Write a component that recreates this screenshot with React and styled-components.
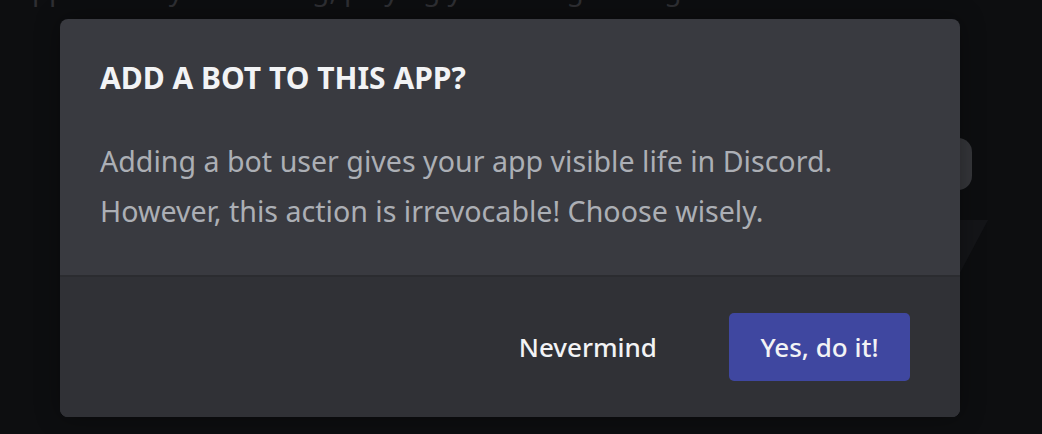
import React from "react";
import styled, { createGlobalStyle } from "styled-components";

const Global = createGlobalStyle`
  html, body { margin: 0; padding: 0; background: #0d0e10; }
  body { font-family: "Noto Sans", "Open Sans", sans-serif; overflow: hidden; }
  #root { width: 1042px; height: 434px; }
`;

const Page = styled.div`
  position: relative;
  width: 1042px;
  height: 434px;
  background: #0d0e10;
  overflow: hidden;
`;

const BackText = styled.p`
  margin: -27px 0 0 14px;
  font-size: 28px;
  line-height: 32px;
  color: #2e2f33;
  white-space: nowrap;
`;

const BackSide = styled.div`
  display: flex;
  flex-direction: column;
  align-items: flex-end;
  gap: 30px;
  padding: 133px 54px 0 0;
`;

const BackPill = styled.div`
  width: 40px;
  height: 52px;
  border-radius: 0 14px 14px 0;
  background: #35363a;
  margin-right: 16px;
`;

const BackField = styled.div`
  width: 60px;
  height: 52px;
  background: #141518;
  clip-path: polygon(0 0, 100% 0, 54% 100%, 0 100%);
`;

const Overlay = styled.div`
  position: absolute;
  inset: 0;
  padding: 19px 0 0 60px;
`;

const Modal = styled.div`
  width: 900px;
  height: 398px;
  border-radius: 8px;
  overflow: hidden;
  background: #393a40;
  display: flex;
  flex-direction: column;
  box-shadow: 0 0 24px rgba(0, 0, 0, 0.35);
`;

const Body = styled.div`
  flex: 1;
  padding: 39px 40px 0 40px;
  border-bottom: 2px solid #2b2c30;
`;

const Title = styled.h1`
  margin: 0;
  font-size: 30px;
  line-height: 40px;
  font-weight: 700;
  color: #f2f3f5;
  text-transform: uppercase;
`;

const Text = styled.p`
  margin: 38px 0 0 0;
  font-size: 28.6px;
  line-height: 50px;
  color: #acafb5;
`;

const Footer = styled.div`
  height: 140px;
  flex-shrink: 0;
  background: #303136;
  display: flex;
  align-items: center;
  justify-content: flex-end;
  gap: 72px;
  padding: 0 50px 0 0;
  box-sizing: border-box;
`;

const Button = styled.button`
  height: 68px;
  border: none;
  border-radius: 5px;
  padding: 0;
  font-family: inherit;
  font-size: 26px;
  font-weight: 500;
  color: #f2f3f5;
  cursor: pointer;
  background: ${(p) => (p.$primary ? "#3f47a0" : "transparent")};
  width: ${(p) => (p.$primary ? "181px" : "auto")};
`;

export default function App() {
  return (
    <>
      <Global />
      <Page>
        <BackText>Application you're using, playing your bot game again</BackText>
        <BackSide>
          <BackPill />
          <BackField />
        </BackSide>
        <Overlay>
          <Modal>
            <Body>
              <Title>Add a bot to this app?</Title>
              <Text>
                Adding a bot user gives your app visible life in Discord.
                <br />
                However, this action is irrevocable! Choose wisely.
              </Text>
            </Body>
            <Footer>
              <Button>Nevermind</Button>
              <Button $primary>Yes, do it!</Button>
            </Footer>
          </Modal>
        </Overlay>
      </Page>
    </>
  );
}
